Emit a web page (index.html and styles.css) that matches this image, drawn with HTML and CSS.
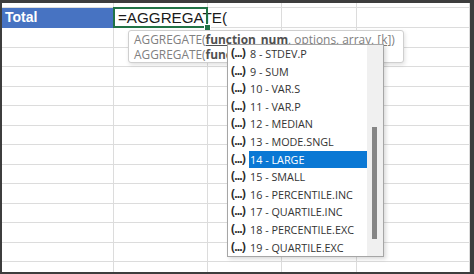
FILE: index.html
```html
<!DOCTYPE html>
<html>
<head>
<meta charset="utf-8">
<link rel="stylesheet" href="styles.css">
</head>
<body>
<div class="frame">
  <div class="sheet">
    <div class="cell"></div><div class="cell"></div><div class="cell"></div><div class="cell"></div><div class="cell"></div>
    <div class="cell total">Total</div><div class="cell edit">=AGGREGATE(</div><div class="cell"></div><div class="cell"></div><div class="cell"></div>
    <div class="cell"></div><div class="cell"></div><div class="cell"></div><div class="cell"></div><div class="cell"></div>
    <div class="cell"></div><div class="cell"></div><div class="cell"></div><div class="cell"></div><div class="cell"></div>
    <div class="cell"></div><div class="cell"></div><div class="cell"></div><div class="cell"></div><div class="cell"></div>
    <div class="cell"></div><div class="cell"></div><div class="cell"></div><div class="cell"></div><div class="cell"></div>
    <div class="cell"></div><div class="cell"></div><div class="cell"></div><div class="cell"></div><div class="cell"></div>
    <div class="cell"></div><div class="cell"></div><div class="cell"></div><div class="cell"></div><div class="cell"></div>
    <div class="cell"></div><div class="cell"></div><div class="cell"></div><div class="cell"></div><div class="cell"></div>
    <div class="cell"></div><div class="cell"></div><div class="cell"></div><div class="cell"></div><div class="cell"></div>
    <div class="cell"></div><div class="cell"></div><div class="cell"></div><div class="cell"></div><div class="cell"></div>
    <div class="cell"></div><div class="cell"></div><div class="cell"></div><div class="cell"></div><div class="cell"></div>
    <div class="cell"></div><div class="cell"></div><div class="cell"></div><div class="cell"></div><div class="cell"></div>
    <div class="cell"></div><div class="cell"></div><div class="cell"></div><div class="cell"></div><div class="cell"></div>
    <div class="cell"></div><div class="cell"></div><div class="cell"></div><div class="cell"></div><div class="cell"></div>
  </div>

  <div class="active"><span class="handle"></span></div>

  <div class="tooltip">
    <div class="tip-line">AGGREGATE(<b class="arg">function_num</b><u>, options, array, [k]</u>)</div>
    <div class="tip-line">AGGREGATE(<b>function_num</b>, options, ref1, ...)</div>
  </div>

  <div class="dropdown">
    <ul class="list">
      <li class="item"><span class="ico">(...)</span><span class="lbl">8 - STDEV.P</span></li>
      <li class="item"><span class="ico">(...)</span><span class="lbl">9 - SUM</span></li>
      <li class="item"><span class="ico">(...)</span><span class="lbl">10 - VAR.S</span></li>
      <li class="item"><span class="ico">(...)</span><span class="lbl">11 - VAR.P</span></li>
      <li class="item"><span class="ico">(...)</span><span class="lbl">12 - MEDIAN</span></li>
      <li class="item"><span class="ico">(...)</span><span class="lbl">13 - MODE.SNGL</span></li>
      <li class="item selected"><span class="ico">(...)</span><span class="lbl">14 - LARGE</span></li>
      <li class="item"><span class="ico">(...)</span><span class="lbl">15 - SMALL</span></li>
      <li class="item"><span class="ico">(...)</span><span class="lbl">16 - PERCENTILE.INC</span></li>
      <li class="item"><span class="ico">(...)</span><span class="lbl">17 - QUARTILE.INC</span></li>
      <li class="item"><span class="ico">(...)</span><span class="lbl">18 - PERCENTILE.EXC</span></li>
      <li class="item"><span class="ico">(...)</span><span class="lbl">19 - QUARTILE.EXC</span></li>
    </ul>
    <div class="scrollbar"><div class="thumb"></div></div>
  </div>
</div>
</body>
</html>
```

FILE: styles.css
```css
html, body {
  margin: 0;
  padding: 0;
}
body {
  background: #3d3d3d;
  width: 474px;
  height: 274px;
  overflow: hidden;
  padding-top: 3px;
  padding-left: 2px;
  box-sizing: border-box;
}
.frame {
  position: relative;
  width: 468px;
  height: 269px;
  background: #ffffff;
  overflow: hidden;
  font-family: "Open Sans", "Noto Sans", sans-serif;
}
.sheet {
  display: grid;
  grid-template-columns: 112px 94px 74px 75px 1fr;
  grid-template-rows: 5px 20px repeat(13, 19.5px);
}
.cell {
  box-sizing: border-box;
  border-right: 1px solid #dcdcdc;
  border-bottom: 1px solid #dcdcdc;
  white-space: nowrap;
  min-width: 0;
}
.total {
  background: #4773c2;
  color: #ffffff;
  font-family: "Liberation Sans", Arial, sans-serif;
  font-weight: bold;
  font-size: 14px;
  line-height: 19px;
  padding-left: 3px;
  border-color: #4773c2;
}
.edit {
  overflow: visible;
  position: relative;
  z-index: 1;
  font-family: "Liberation Sans", Arial, sans-serif;
  font-size: 15.2px;
  line-height: 19px;
  color: #1a1a1a;
  padding-left: 4px;
  border-right: none;
}
.active {
  position: absolute;
  left: 111px;
  top: 4px;
  width: 95px;
  height: 21px;
  box-sizing: border-box;
  border: 2px solid #217346;
  z-index: 2;
}
.handle {
  position: absolute;
  right: -5px;
  bottom: -5px;
  width: 5px;
  height: 5px;
  background: #217346;
  border: 1px solid #ffffff;
}
.tooltip {
  position: absolute;
  left: 126px;
  top: 27px;
  width: 276px;
  height: 33px;
  box-sizing: border-box;
  background: #ffffff;
  border: 1px solid #cfcfcf;
  border-radius: 3px;
  box-shadow: 1px 2px 4px rgba(0, 0, 0, 0.12);
  padding: 1px 0 0 5px;
  z-index: 3;
  color: #808080;
  font-size: 11.9px;
}
.tip-line {
  line-height: 15px;
  white-space: nowrap;
}
.tip-line b {
  color: #505050;
  font-weight: bold;
}
.tip-line .arg {
  text-decoration: underline;
}
.tip-line u {
  text-decoration: underline;
}
.dropdown {
  position: absolute;
  left: 225px;
  top: 41px;
  width: 157px;
  height: 213px;
  box-sizing: border-box;
  background: #ffffff;
  border: 1px solid #a6a6a6;
  box-shadow: 2px 2px 4px rgba(0, 0, 0, 0.15);
  display: flex;
  z-index: 4;
}
.list {
  list-style: none;
  margin: 0;
  padding: 0;
  flex: 1;
}
.item {
  display: flex;
  align-items: stretch;
  height: 17.6px;
  font-size: 10.8px;
  color: #333333;
  padding-left: 3px;
}
.ico {
  width: 18px;
  font-size: 12px;
  font-weight: bold;
  color: #2a2a2a;
  line-height: 16px;
  letter-spacing: -0.9px;
}
.lbl {
  flex: 1;
  line-height: 17.6px;
  padding-left: 1px;
  white-space: nowrap;
}
.selected .lbl {
  background: #0a78d4;
  color: #ffffff;
}
.scrollbar {
  width: 16px;
  background: #f0f0f0;
  padding-top: 82px;
  box-sizing: border-box;
}
.thumb {
  width: 5px;
  height: 112px;
  margin-left: 5px;
  background: #868686;
}
```
